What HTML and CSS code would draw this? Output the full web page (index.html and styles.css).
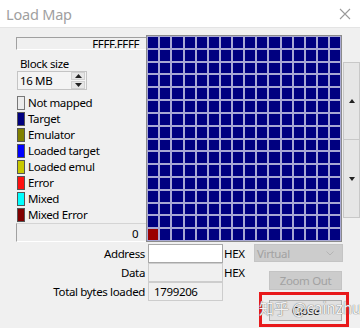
FILE: index.html
```html
<!DOCTYPE html>
<html lang="en">
<head>
<meta charset="utf-8">
<title>Load Map</title>
<link rel="stylesheet" href="styles.css">
</head>
<body>
<div class="window">
  <div class="titlebar">
    <span class="title">Load Map</span>
    <svg class="close-x" width="12" height="12" viewBox="0 0 12 12"><path d="M1 1 L11 11 M11 1 L1 11" stroke="#9a9a9a" stroke-width="1.1" fill="none"/></svg>
  </div>
  <div class="main">
    <div class="left">
      <div class="static-field">FFFF.FFFF</div>
      <div class="block-label">Block size</div>
      <div class="spin">
        <span class="spin-value">16 MB</span>
        <span class="spin-btns">
          <span class="spin-btn"><svg width="7" height="4" viewBox="0 0 7 4"><path d="M0 4 L3.5 0 L7 4 Z" fill="#222"/></svg></span>
          <span class="spin-btn"><svg width="7" height="4" viewBox="0 0 7 4"><path d="M0 0 L3.5 4 L7 0 Z" fill="#222"/></svg></span>
        </span>
      </div>
      <ul class="legend">
        <li><span class="swatch sw-notmapped"></span>Not mapped</li>
        <li><span class="swatch sw-target"></span>Target</li>
        <li><span class="swatch sw-emulator"></span>Emulator</li>
        <li><span class="swatch sw-ltarget"></span>Loaded target</li>
        <li><span class="swatch sw-lemul"></span>Loaded emul</li>
        <li><span class="swatch sw-error"></span>Error</li>
        <li><span class="swatch sw-mixed"></span>Mixed</li>
        <li><span class="swatch sw-mixederr"></span>Mixed Error</li>
      </ul>
      <div class="static-field static-bottom">0</div>
    </div>
    <div class="map" id="map"></div>
    <div class="side">
      <div class="side-btn"><svg width="6" height="4" viewBox="0 0 6 4"><path d="M0 4 L3 0 L6 4 Z" fill="#222"/></svg></div>
      <div class="side-btn"><svg width="6" height="4" viewBox="0 0 6 4"><path d="M0 0 L3 4 L6 0 Z" fill="#222"/></svg></div>
    </div>
  </div>
  <div class="bottom">
    <div class="fields">
      <span class="label">Address</span>
      <span class="box box-edit"></span>
      <span class="hex">HEX</span>
      <span class="label">Data</span>
      <span class="box box-ro"></span>
      <span class="hex">HEX</span>
      <span class="label">Total bytes loaded</span>
      <span class="box box-ro">1799206</span>
      <span class="hex"></span>
    </div>
    <div class="actions">
      <div class="combo">
        <span>Virtual</span>
        <svg width="8" height="5" viewBox="0 0 8 5"><path d="M0.5 0.5 L4 4 L7.5 0.5" stroke="#b4b4b4" stroke-width="1" fill="none"/></svg>
      </div>
      <div class="btn btn-disabled">Zoom Out</div>
      <div class="btn btn-close">Close</div>
    </div>
  </div>
  <div class="highlight"></div>
  <div class="watermark">知乎 @cainzhu</div>
</div>
<script src="script.js"></script>
</body>
</html>
```

FILE: styles.css
```css
html, body {
  margin: 0;
  padding: 0;
}
body {
  width: 360px;
  height: 328px;
  overflow: hidden;
  background: #f0f0f0;
  font-family: "Noto Sans", "Open Sans", sans-serif;
  font-size: 11.5px;
  letter-spacing: -0.35px;
  color: #000;
}
.window {
  position: relative;
  width: 360px;
  height: 328px;
}
.titlebar {
  height: 27px;
  background: #fff;
  border-bottom: 1px solid #e4e4e4;
  display: flex;
  align-items: center;
  justify-content: space-between;
  padding: 0 9px 0 6px;
}
.title {
  font-size: 14.5px;
  letter-spacing: -0.2px;
  color: #a0a0a0;
  line-height: 1;
  margin-top: 1px;
}
.close-x {
  display: block;
}
.main {
  display: flex;
  padding: 7px 0 0 16px;
}
.left {
  width: 131px;
  display: flex;
  flex-direction: column;
}
.static-field {
  margin-top: 2px;
  height: 13px;
  box-sizing: border-box;
  border-top: 1px solid #a0a0a0;
  border-left: 1px solid #a0a0a0;
  border-bottom: 1px solid #fff;
  text-align: right;
  padding-right: 7px;
  line-height: 12px;
}
.static-bottom {
  margin-top: 0;
  height: 19px;
  line-height: 19px;
  padding-right: 8px;
  border-top: 1px solid #d4d4d4;
  background: #eeeeee;
}
.block-label {
  margin-top: 6px;
  height: 15px;
  line-height: 15px;
  padding-left: 4px;
}
.spin {
  margin-left: 1px;
  width: 70px;
  height: 19px;
  box-sizing: border-box;
  border: 1px solid #c4c4c4;
  display: flex;
  align-items: center;
  justify-content: space-between;
  background: #f4f4f4;
}
.spin-value {
  padding-left: 2px;
}
.spin-btns {
  display: flex;
  flex-direction: column;
  width: 14px;
  height: 17px;
  margin-right: 1px;
  gap: 1px;
}
.spin-btn {
  flex: 1;
  background: #e6e6e6;
  border: 1px solid #d0d0d0;
  display: flex;
  align-items: center;
  justify-content: center;
}
.spin-btn svg {
  display: block;
}
.legend {
  list-style: none;
  margin: 5px 0 0 0;
  padding: 0;
}
.legend li {
  height: 16px;
  display: flex;
  align-items: center;
  line-height: 16px;
}
.swatch {
  width: 6px;
  height: 12px;
  border: 1px solid #555;
  margin: 0 3px 0 1px;
  flex: none;
}
.sw-notmapped { background: #ececec; border-color: #777; }
.sw-target { background: #000080; }
.sw-emulator { background: #808000; }
.sw-ltarget { background: #0000ff; }
.sw-lemul { background: #c8c800; }
.sw-error { background: #ff1010; }
.sw-mixed { background: #00ffff; }
.sw-mixederr { background: #800000; }
.map {
  width: 197px;
  height: 207px;
  box-sizing: border-box;
  border: 1px solid #8c8c8c;
  padding: 1px;
  background: #a8a8d4;
  display: grid;
  grid-template-columns: repeat(16, 1fr);
  grid-template-rows: repeat(16, 1fr);
  gap: 2px;
}
.cell {
  background: #000080;
}
.cell-error {
  background: #9a0000;
}
.side {
  margin-left: 1px;
  margin-top: 27px;
  width: 17px;
  display: flex;
  flex-direction: column;
}
.side-btn {
  height: 78px;
  box-sizing: border-box;
  background: #e6e6e6;
  border: 1px solid #c8c8c8;
  display: flex;
  align-items: center;
  justify-content: flex-start;
  padding-left: 5px;
}
.side-btn + .side-btn {
  border-top: none;
}
.bottom {
  display: flex;
  margin-top: 2px;
}
.fields {
  display: grid;
  grid-template-columns: 148px 75px 31px;
  grid-template-rows: 19px 19px 19px;
  align-items: center;
}
.label {
  text-align: right;
  padding-right: 3px;
}
.box {
  height: 19px;
  box-sizing: border-box;
  border: 1px solid #b4b4b4;
  line-height: 17px;
  padding-left: 5px;
}
.box-edit {
  background: #fff;
  border-color: #a8a8a8;
}
.box-ro {
  background: #f0f0f0;
  border-color: #cdcdcd;
}
.hex {
  padding-left: 1px;
}
.actions {
  display: flex;
  flex-direction: column;
  width: 89px;
}
.combo {
  height: 18px;
  box-sizing: border-box;
  background: #cccccc;
  border: 1px solid #c4c4c4;
  color: #a2a2a2;
  display: flex;
  align-items: center;
  justify-content: space-between;
  padding: 0 8px 0 2px;
}
.combo svg {
  display: block;
}
.btn {
  margin-left: 15px;
  width: 73px;
  box-sizing: border-box;
  display: flex;
  align-items: center;
  justify-content: center;
}
.btn-disabled {
  margin-top: 9px;
  height: 19px;
  background: #cccccc;
  border: 1px solid #c4c4c4;
  color: #a2a2a2;
}
.btn-close {
  margin-top: 10px;
  height: 21px;
  background: #e1e1e1;
  border: 1px solid #adadad;
  color: #111;
}
.highlight {
  position: absolute;
  left: 259px;
  top: 292px;
  width: 90px;
  height: 35px;
  box-sizing: border-box;
  border: 3px solid #e8191b;
}
.watermark {
  position: absolute;
  left: 259px;
  top: 298px;
  font-family: "Noto Sans CJK SC", "Noto Sans", sans-serif;
  font-size: 15px;
  letter-spacing: 0;
  line-height: 20px;
  color: rgba(255, 255, 255, 0.92);
  text-shadow: 0 0 1px #7a7a7a, 0 0 1px #7a7a7a;
  white-space: nowrap;
}
```

FILE: script.js
```js
const map = document.getElementById('map');
for (let i = 0; i < 256; i++) {
  const c = document.createElement('div');
  c.className = i === 240 ? 'cell cell-error' : 'cell';
  map.appendChild(c);
}
```
